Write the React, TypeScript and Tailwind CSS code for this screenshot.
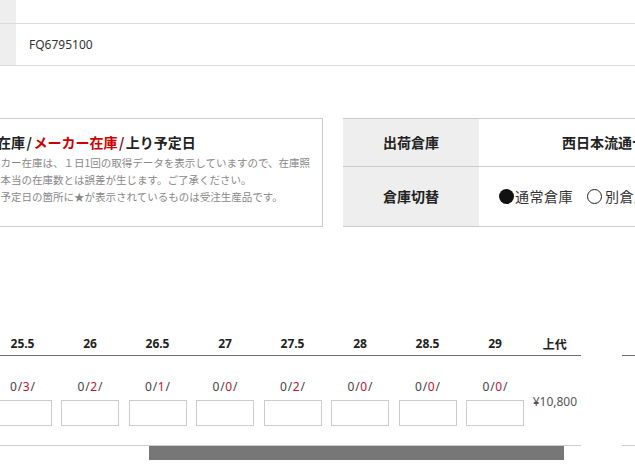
import React from "react";

const sizes: { label: string; a: string; b: string }[] = [
  { label: "25.5", a: "0", b: "3" },
  { label: "26", a: "0", b: "2" },
  { label: "26.5", a: "0", b: "1" },
  { label: "27", a: "0", b: "0" },
  { label: "27.5", a: "0", b: "2" },
  { label: "28", a: "0", b: "0" },
  { label: "28.5", a: "0", b: "0" },
  { label: "29", a: "0", b: "0" },
];

export default function App() {
  return (
    <div
      className="w-[635px] h-[464px] overflow-hidden bg-white text-[#333]"
      style={{ fontFamily: '"Noto Sans", "Noto Sans CJK JP", sans-serif' }}
    >
      {/* top rows */}
      <div className="flex h-[24px] border-b border-[#dcdcdc]">
        <div className="w-[16px] bg-[#eeeeee]" />
        <div className="flex-1" />
      </div>
      <div className="flex h-[42px] border-b border-[#dcdcdc]">
        <div className="w-[16px] bg-[#eeeeee]" />
        <div className="flex-1 flex items-center pl-[13px] text-[12px] text-[#333]">FQ6795100</div>
      </div>

      {/* notice + warehouse */}
      <div className="flex mt-[52px] h-[109px]">
        <div className="shrink-0 w-[375px] ml-[-52px] border border-[#cccccc] pl-[20px] pt-[12px] whitespace-nowrap">
          <div
            className="text-[14px] leading-[22px] font-bold text-[#222]"
            style={{ fontFamily: '"Noto Sans CJK JP", sans-serif' }}
          >
            自社在庫<span className="mx-[1.5px]">/</span>
            <span className="text-[#cc0000]">メーカー在庫</span>
            <span className="mx-[1.5px] text-[#8a1010]">/</span>上り予定日
          </div>
          <div
            className="mt-[1px] text-[10.5px] leading-[17px] text-[#888]"
            style={{ fontFamily: '"Noto Sans CJK JP", sans-serif' }}
          >
            <div>※メーカー在庫は、１日1回の取得データを表示していますので、在庫照</div>
            <div>会時の本当の在庫数とは誤差が生じます。ご了承ください。</div>
            <div>※上り予定日の箇所に★が表示されているものは受注生産品です。</div>
          </div>
        </div>
        <div
          className="shrink-0 ml-[20px] w-[400px] border-t border-[#cccccc]"
          style={{ fontFamily: '"Noto Sans CJK JP", sans-serif' }}
        >
          <div className="flex h-[48px] border-b border-[#cccccc]">
            <div className="w-[136px] bg-[#eeeeee] flex items-center justify-center text-[14px] font-bold text-[#222]">
              出荷倉庫
            </div>
            <div className="flex-1 flex items-center pl-[83px] text-[14px] font-bold text-[#222] whitespace-nowrap">
              西日本流通センター
            </div>
          </div>
          <div className="flex h-[60px] border-b border-[#cccccc]">
            <div className="w-[136px] bg-[#eeeeee] flex items-center justify-center text-[14px] font-bold text-[#222]">
              倉庫切替
            </div>
            <div className="flex-1 flex items-center pl-[20px] text-[14px] text-[#333] whitespace-nowrap tracking-[0.5px]">
              <span className="w-[15px] h-[15px] rounded-full bg-[#111] mr-[1px]" />
              <span>通常倉庫</span>
              <span className="ml-[14px] w-[15px] h-[15px] rounded-full border-[1.5px] border-[#222] mr-[3px]" />
              <span>別倉庫</span>
            </div>
          </div>
        </div>
      </div>

      {/* size table */}
      <div className="flex mt-[105px]">
        <div className="shrink-0 ml-[-11.25px] w-[592.25px]">
          <div className="flex h-[24px] border-b border-[#6b6b6b]">
            {sizes.map((s) => (
              <div
                key={s.label}
                className="w-[67.5px] shrink-0 flex items-center justify-center text-[12px] font-bold text-[#222]"
              >
                {s.label}
              </div>
            ))}
            <div
              className="w-[52.25px] shrink-0 flex items-center justify-center text-[12px] font-bold text-[#222]"
              style={{ fontFamily: '"Noto Sans CJK JP", sans-serif' }}
            >
              上代
            </div>
          </div>
          <div className="flex h-[90px] border-b border-[#cccccc]">
            {sizes.map((s) => (
              <div key={s.label} className="w-[67.5px] shrink-0 flex flex-col items-center pt-[22px]">
                <div className="text-[12px] leading-[18px] text-[#444] tracking-[0.7px] pl-[0.7px]">
                  {s.a}/<span className="text-[#c8102e]">{s.b}</span>/
                </div>
                <div className="mt-[4px] w-[58px] h-[26px] border border-[#cccccc] bg-white" />
              </div>
            ))}
            <div className="w-[52.25px] shrink-0 flex items-center justify-center text-[12px] text-[#555] pt-[3px]">
              ¥10,800
            </div>
          </div>
        </div>
        <div className="shrink-0 ml-[41px] w-[60px]">
          <div className="h-[24px] border-b border-[#6b6b6b]" />
          <div className="h-[90px] border-b border-[#cccccc]" />
        </div>
      </div>

      {/* scrollbar */}
      <div className="h-[14px] flex">
        <div className="ml-[149px] w-[415px] h-[14px] bg-[#777777]" />
      </div>
    </div>
  );
}
